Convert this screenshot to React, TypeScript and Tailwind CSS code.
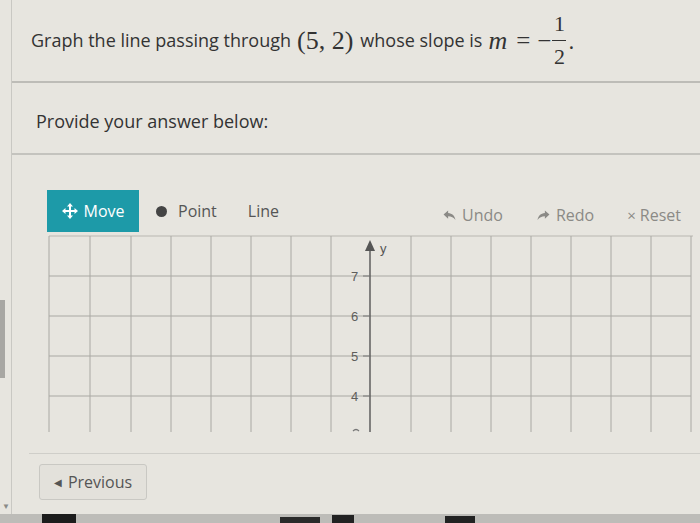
import React from "react";

const font = { fontFamily: '"Open Sans", "Liberation Sans", sans-serif' };
const serif = { fontFamily: '"Liberation Serif", "DejaVu Serif", serif' };

const vLines = [48, 89, 130, 170, 210, 250, 290, 330, 410, 450, 490, 530, 570, 610, 650, 690];
const hLines = [276, 316, 356, 396];
const labels = ["7", "6", "5", "4"];

const MoveIcon = () => (
	<svg width="16" height="16" viewBox="0 0 16 16" fill="white">
		<path d="M8 0 L11 3.5 H9 V7 H12.5 V5 L16 8 L12.5 11 V9 H9 V12.5 H11 L8 16 L5 12.5 H7 V9 H3.5 V11 L0 8 L3.5 5 V7 H7 V3.5 H5 Z" />
	</svg>
);

const UndoIcon = () => (
	<svg width="13" height="11" viewBox="0 0 14 12" fill="#8b8a86">
		<path d="M5.5 0.5 L0.5 5 L5.5 9.5 V6.8 C9 6.8 11.5 8 13.5 11 C12.8 6.5 10 3.6 5.5 3.3 Z" />
	</svg>
);

const RedoIcon = () => (
	<svg width="13" height="11" viewBox="0 0 14 12" fill="#8b8a86">
		<path d="M8.5 0.5 L13.5 5 L8.5 9.5 V6.8 C5 6.8 2.5 8 0.5 11 C1.2 6.5 4 3.6 8.5 3.3 Z" />
	</svg>
);

const Graph = () => (
	<svg width="700" height="200" viewBox="0 232 700 200" className="block">
		<line x1="48" y1="236" x2="692" y2="236" stroke="#b9b8b2" strokeWidth="1.2" />
		{vLines.map((x) => (
			<line key={x} x1={x} y1="236" x2={x} y2="432" stroke="#a9a8a3" strokeWidth="1" />
		))}
		{hLines.map((y) => (
			<line key={y} x1="48" y1={y} x2="690" y2={y} stroke="#a9a8a3" strokeWidth="1" />
		))}
		<line x1="369" y1="246" x2="369" y2="432" stroke="#555" strokeWidth="1.4" />
		<path d="M364 251 L369 240 L374 251 Z" fill="#555" />
		<text x="379" y="253" fontSize="13" fill="#555" fontFamily="Liberation Sans, sans-serif">
			y
		</text>
		{hLines.map((y, i) => (
			<g key={y}>
				<line x1="362" y1={y} x2="369" y2={y} stroke="#777" strokeWidth="1" />
				<text x="350" y={y + 5} fontSize="13" fill="#5e5e5c" fontFamily="Liberation Sans, sans-serif">
					{labels[i]}
				</text>
			</g>
		))}
		<path d="M352 431 Q355 428 358 431" stroke="#777" strokeWidth="1.2" fill="none" />
	</svg>
);

export default function App() {
	return (
		<div className="w-[700px] h-[523px] overflow-hidden bg-[#e7e5df] relative flex flex-col" style={font}>
			<div className="absolute left-0 top-[300px] w-[5px] h-[78px] bg-[#a8a7a3]" />
			<div className="absolute left-[2px] top-[500px] text-[8px] text-[#8a8a88]">▼</div>
			<div className="flex-1 flex flex-col ml-[11px] border-l border-[#c9c8c3]">
				<div className="h-[83px] flex items-center pl-[19px] text-[18px] text-[#333] border-b-2 border-[#bdbcb7]">
					<span>Graph the line passing through</span>
					<span className="ml-[6px] text-[26px]" style={serif}>
						(5, 2)
					</span>
					<span className="ml-[7px]">whose slope is</span>
					<span className="ml-[6px] text-[26px] italic" style={serif}>
						m
					</span>
					<span className="ml-[9px] text-[25px]" style={serif}>
						=
					</span>
					<span className="ml-[7px] text-[25px]" style={serif}>
						−
					</span>
					<span className="ml-[1px] flex flex-col items-center text-[22px] leading-[22px]" style={serif}>
						<span>1</span>
						<span className="w-[14px] border-t border-[#333] my-[5px]" />
						<span>2</span>
					</span>
					<span className="text-[22px] ml-[2px]">.</span>
				</div>
				<div className="h-[72px] flex items-center pl-[24px] pt-[6px] text-[18px] text-[#333] border-b-2 border-[#c4c3be]">
					Provide your answer below:
				</div>
				<div className="pt-[35px]">
					<div className="flex items-center h-[42px] pl-[35px] pr-[19px]">
						<div className="h-[42px] w-[92px] bg-[#1d9aa8] text-white flex items-center justify-center gap-[6px] text-[16px]">
							<MoveIcon />
							<span>Move</span>
						</div>
						<div className="flex items-center ml-[17px] text-[16px] text-[#555]">
							<span className="w-[11px] h-[11px] rounded-full bg-[#444] mr-[11px]" />
							<span>Point</span>
						</div>
						<div className="ml-[31px] text-[16px] text-[#555]">Line</div>
						<div className="ml-auto flex items-center text-[16px] text-[#8b8a86] pt-[8px]">
							<span className="mr-[6px]">
								<UndoIcon />
							</span>
							<span>Undo</span>
							<span className="ml-[34px] mr-[6px]">
								<RedoIcon />
							</span>
							<span>Redo</span>
							<span className="ml-[33px] mr-[4px] text-[15px]">×</span>
							<span>Reset</span>
						</div>
					</div>
				</div>
				<div className="-ml-[11px]">
					<Graph />
				</div>
				<div className="mt-[21px] ml-[17px] border-t border-[#cfcec9]" />
				<div className="pl-[27px] pt-[10px]">
					<div className="w-[108px] h-[36px] border border-[#c9c8c3] rounded-[3px] flex items-center justify-center text-[16px] text-[#555] bg-[#e3e1db]">
						<span className="text-[10px] mr-[6px]">◀</span>
						<span>Previous</span>
					</div>
				</div>
			</div>
			<div className="h-[9px] bg-[#bdbcb8] relative">
				<div className="absolute left-[42px] top-0 w-[34px] h-[9px] bg-[#1c1c1c]" />
				<div className="absolute left-[280px] top-[3px] w-[40px] h-[6px] bg-[#2a2a2a]" />
				<div className="absolute left-[332px] top-[1px] w-[22px] h-[8px] bg-[#222]" />
				<div className="absolute left-[445px] top-[2px] w-[30px] h-[7px] bg-[#222]" />
			</div>
		</div>
	);
}
